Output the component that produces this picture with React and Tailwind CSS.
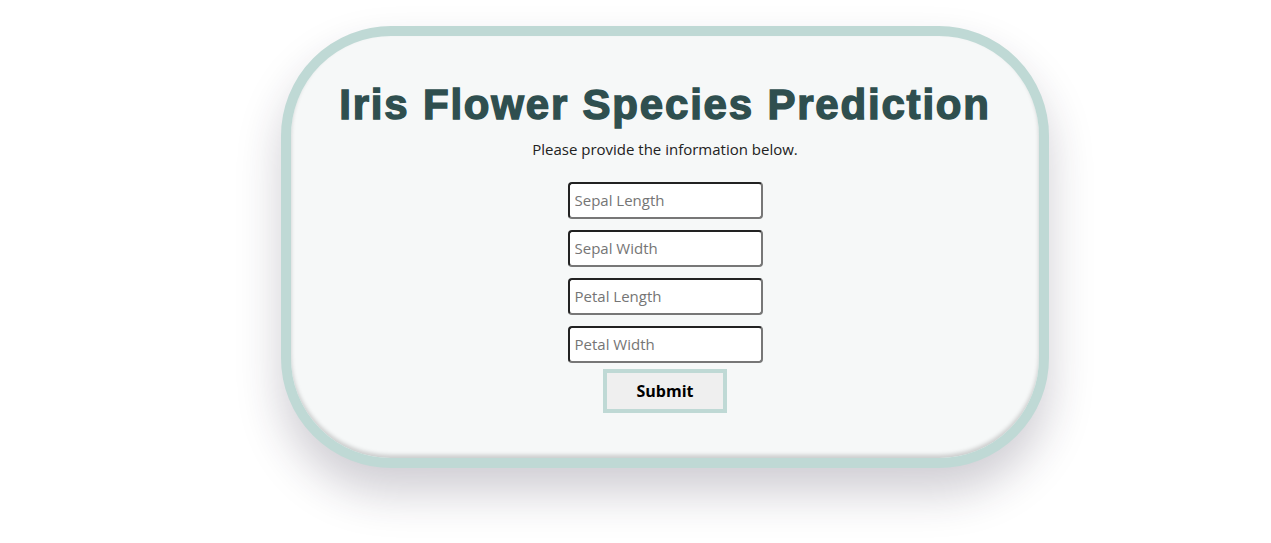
export default function App() {
  const fields = ['Sepal Length', 'Sepal Width', 'Petal Length', 'Petal Width'];

  return (
    <div className="min-h-screen bg-white pt-[26px]">
      <div className="ml-[281px] w-[768px] h-[442px] rounded-[110px] border-[10px] border-[#bfd9d5] bg-[#f6f8f8] shadow-[0_25px_45px_rgba(40,30,60,0.22),inset_0_-3px_4px_rgba(0,0,0,0.18)] flex flex-col items-center pt-[43px]">
        <h1 className="text-[42px] leading-[52px] font-black text-[#2f4f4f] tracking-[1.8px] [-webkit-text-stroke:1.4px_#2f4f4f]" style={{ fontFamily: '"Liberation Sans", Arial, sans-serif' }}>
          Iris Flower Species Prediction
        </h1>
        <p className="mt-[7px] text-[15px] text-[#222] font-['Open_Sans',sans-serif]">
          Please provide the information below.
        </p>
        <form className="mt-[21px] flex flex-col items-center gap-[11px]" onSubmit={(e) => e.preventDefault()}>
          {fields.map((f) => (
            <input
              key={f}
              placeholder={f}
              className="w-[195px] h-[37px] rounded-[4px] border-2 border-t-[#222] border-l-[#222] border-b-[#777] border-r-[#777] bg-white px-[5px] text-[15px] placeholder:text-[#757575] font-['Open_Sans',sans-serif] outline-none"
            />
          ))}
          <button
            type="submit"
            className="-mt-[5px] w-[124px] h-[44px] border-4 border-[#bfd9d5] bg-[#efefef] text-[16px] font-bold text-black font-['Open_Sans',sans-serif]"
          >
            Submit
          </button>
        </form>
      </div>
    </div>
  );
}
